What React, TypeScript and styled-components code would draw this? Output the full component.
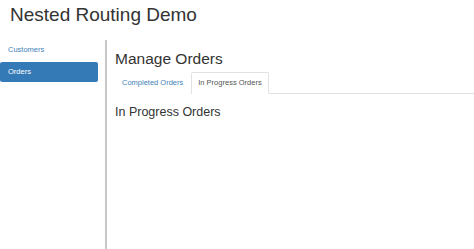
import React from "react";
import styled, { createGlobalStyle } from "styled-components";

const Global = createGlobalStyle`
  html, body { margin: 0; padding: 0; background: #fff; }
  body { font-family: "Liberation Sans", Arial, sans-serif; color: #333; }
`;

const Page = styled.div`
  width: 474px;
  height: 249px;
  display: flex;
  flex-direction: column;
  overflow: hidden;
`;

const Title = styled.h1`
  margin: 0;
  padding: 4px 0 0 10px;
  height: 39px;
  box-sizing: border-box;
  font-size: 19px;
  line-height: 22px;
  font-weight: 400;
  color: #333;
`;

const Body = styled.div`
  flex: 1;
  display: flex;
`;

const Sidebar = styled.nav`
  width: 98px;
  display: flex;
  flex-direction: column;
  gap: 2px;
  padding-top: 1px;
`;

const Pill = styled.a<{ $active?: boolean }>`
  display: block;
  padding: 6px 8px;
  font-size: 7.5px;
  line-height: 8px;
  border-radius: 2px;
  text-decoration: none;
  color: ${(p) => (p.$active ? "#fff" : "#3f7fb8")};
  background: ${(p) => (p.$active ? "#337ab7" : "transparent")};
`;

const Divider = styled.div`
  width: 2px;
  background: #c8c8c8;
  margin-left: 7px;
  margin-top: 1px;
`;

const Main = styled.main`
  flex: 1;
  padding-left: 8px;
  padding-top: 10px;
`;

const H2 = styled.h2`
  margin: 0 0 4px 0;
  font-size: 15.5px;
  line-height: 19px;
  font-weight: 400;
  color: #333;
`;

const Tabs = styled.div`
  display: flex;
  border-bottom: 1px solid #e2e2e2;
`;

const Tab = styled.a<{ $active?: boolean }>`
  display: block;
  padding: 6px 6px;
  margin-right: 1px;
  font-size: 7.5px;
  line-height: 8px;
  text-decoration: none;
  border: 1px solid ${(p) => (p.$active ? "#e2e2e2" : "transparent")};
  border-bottom-color: ${(p) => (p.$active ? "#fff" : "transparent")};
  margin-bottom: -1px;
  border-radius: 2px 2px 0 0;
  color: ${(p) => (p.$active ? "#555" : "#3f7fb8")};
  background: #fff;
`;

const H3 = styled.h3`
  margin: 11px 0 0 0;
  font-size: 12.5px;
  line-height: 15px;
  font-weight: 400;
  color: #333;
`;

export default function App() {
  return (
    <Page>
      <Global />
      <Title>Nested Routing Demo</Title>
      <Body>
        <Sidebar>
          <Pill>Customers</Pill>
          <Pill $active>Orders</Pill>
        </Sidebar>
        <Divider />
        <Main>
          <H2>Manage Orders</H2>
          <Tabs>
            <Tab>Completed Orders</Tab>
            <Tab $active>In Progress Orders</Tab>
          </Tabs>
          <H3>In Progress Orders</H3>
        </Main>
      </Body>
    </Page>
  );
}
